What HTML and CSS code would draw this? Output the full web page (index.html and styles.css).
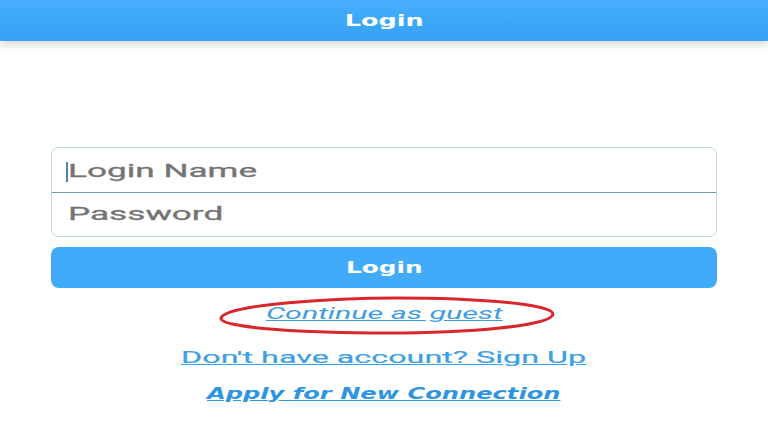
FILE: index.html
```html
<!DOCTYPE html>
<html>
<head>
<meta charset="utf-8">
<link rel="stylesheet" href="styles.css">
</head>
<body>
<header class="appbar"><span class="appbar-title">Login</span></header>
<main class="content">
  <div class="fields">
    <div class="field field-first"><span class="caret"></span><span class="ph">Login Name</span></div>
    <div class="field field-second"><span class="ph">Password</span></div>
  </div>
  <div class="btn"><span class="btn-label">Login</span></div>
  <div class="links">
    <svg class="mark" width="340" height="42" viewBox="0 0 340 42">
      <path d="M4 24 C 10 10, 120 4, 180 4 C 260 4, 336 10, 336 20 C 336 32, 250 39, 170 39 C 90 39, 2 34, 4 24 Z" fill="none" stroke="#d8262c" stroke-width="3"/>
    </svg>
    <div class="link-row row-guest"><a class="lnk guest">Continue as guest</a></div>
    <div class="link-row row-signup"><a class="lnk signup">Don't have account? Sign Up</a></div>
    <div class="link-row row-apply"><a class="lnk apply">Apply for New Connection</a></div>
  </div>
</main>
</body>
</html>
```
FILE: styles.css
```css
html, body {
  margin: 0;
  padding: 0;
  background: #ffffff;
  width: 768px;
  height: 432px;
  overflow: hidden;
}
body {
  font-family: "Roboto", "Liberation Sans", sans-serif;
}
.appbar {
  height: 41px;
  background: linear-gradient(#46aefc, #35a2f6);
  display: flex;
  align-items: center;
  justify-content: center;
  box-shadow: 0 3px 9px rgba(0, 0, 0, 0.18);
  position: relative;
  z-index: 1;
}
.appbar-title {
  display: inline-block;
  font-family: "DejaVu Sans", sans-serif;
  font-weight: bold;
  font-size: 15px;
  color: #ffffff;
  transform: scaleX(1.7);
  line-height: 1;
  margin-top: 1px;
}
.content {
  padding: 106px 51px 0 51px;
}
.fields {
  border: 1px solid #bcd7df;
  border-radius: 7px;
  height: 88px;
  display: flex;
  flex-direction: column;
}
.field {
  display: flex;
  align-items: center;
  padding-left: 14px;
}
.field-first {
  height: 45px;
  padding-top: 3px;
  box-sizing: border-box;
  border-bottom: 1px solid #6a98b0;
}
.field-second {
  flex: 1;
}
.caret {
  width: 2px;
  height: 20px;
  background: #4a86ad;
}
.ph {
  display: inline-block;
  font-size: 18.5px;
  color: #747474;
  transform: scaleX(1.9);
  transform-origin: left center;
  line-height: 1;
  -webkit-text-stroke: 0.3px #747474;
}
.field-second .ph {
  margin-left: 2px;
}
.btn {
  margin-top: 10px;
  height: 41px;
  border-radius: 8px;
  background: #42abf9;
  display: flex;
  align-items: center;
  justify-content: center;
}
.btn-label {
  display: inline-block;
  font-family: "DejaVu Sans", sans-serif;
  font-weight: bold;
  font-size: 15px;
  color: #ffffff;
  transform: scaleX(1.65);
  line-height: 1;
  margin-top: 2px;
}
.links {
  position: relative;
  display: flex;
  flex-direction: column;
  align-items: center;
}
.mark {
  position: absolute;
  left: 166px;
  top: 6px;
}
.link-row {
  height: 28px;
  display: flex;
  align-items: center;
  justify-content: center;
}
.row-guest {
  margin-top: 12px;
}
.row-signup {
  margin-top: 15px;
}
.row-apply {
  margin-top: 9px;
}
.lnk {
  display: inline-block;
  text-decoration: underline;
  line-height: 1;
  transform: scaleX(1.9);
}
.guest {
  font-size: 16px;
  font-style: italic;
  color: #3d9ce2;
}
.signup {
  font-size: 17px;
  color: #3d9fe4;
  -webkit-text-stroke: 0.2px #3d9fe4;
}
.apply {
  font-family: "DejaVu Sans", sans-serif;
  font-weight: bold;
  font-style: italic;
  font-size: 15px;
  color: #2f95e2;
  transform: scaleX(1.61);
}
```
